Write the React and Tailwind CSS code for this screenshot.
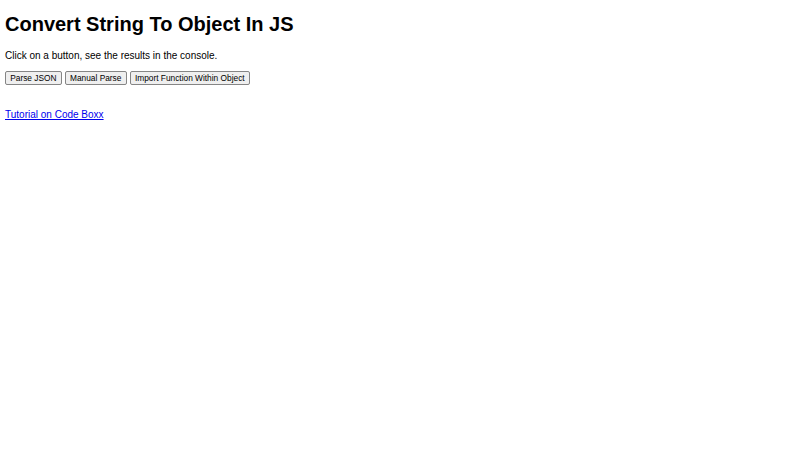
import React from 'react';

const buttons = ['Parse JSON', 'Manual Parse', 'Import Function Within Object'];

export default function App() {
  const log = (name) => console.log(name);

  return (
    <div className="min-h-screen bg-white px-[5px] pt-[13.4px] text-black font-['Liberation_Sans',Arial,sans-serif]">
      {/* Heading */}
      <h1 className="m-0 text-[20px] leading-[23px] font-bold">Convert String To Object In JS</h1>
      <p className="mt-[13.4px] mb-[10px] text-[10px] leading-[11.5px]">
        Click on a button, see the results in the console.
      </p>

      {/* Demo buttons */}
      <div className="flex items-start gap-[3px]">
        {buttons.map(b => (
          <button
            key={b}
            onClick={() => log(b)}
            className="bg-[#efefef] border border-[#858585] rounded-[2px] px-[4.25px] py-[1px] text-[8.33px] leading-[10px] text-black cursor-default"
          >
            {b}
          </button>
        ))}
      </div>

      <div className="mt-[24px] text-[10px] leading-[11.5px]">
        <a href="#" className="text-[#0000ee] underline">Tutorial on Code Boxx</a>
      </div>
    </div>
  );
}
